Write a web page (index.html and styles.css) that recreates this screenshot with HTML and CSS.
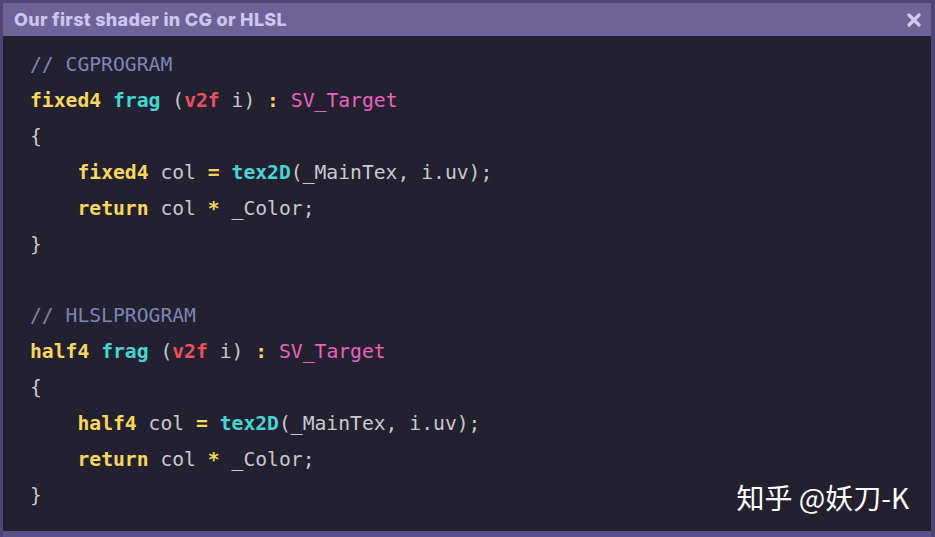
FILE: index.html
```html
<!DOCTYPE html>
<html>
<head>
<meta charset="utf-8">
<link rel="stylesheet" href="styles.css">
</head>
<body>
<div class="frame">
  <div class="header">
    <span class="title">Our first shader in CG or HLSL</span>
    <svg class="close" width="14" height="14" viewBox="0 0 14 14"><path d="M2 2 L12 12 M12 2 L2 12" stroke="#d2cbf0" stroke-width="3.2" stroke-linecap="round"/></svg>
  </div>
  <div class="code">
<pre><span class="cm">// CGPROGRAM</span>
<span class="kw">fixed4</span> <span class="fn">frag</span> (<span class="ty">v2f</span> i) <span class="op">:</span> <span class="sem">SV_Target</span>
{
    <span class="kw">fixed4</span> col <span class="op">=</span> <span class="fn">tex2D</span>(_MainTex, i.uv);
    <span class="kw">return</span> col <span class="op">*</span> _Color;
}

<span class="cm">// HLSLPROGRAM</span>
<span class="kw">half4</span> <span class="fn">frag</span> (<span class="ty">v2f</span> i) <span class="op">:</span> <span class="sem">SV_Target</span>
{
    <span class="kw">half4</span> col <span class="op">=</span> <span class="fn">tex2D</span>(_MainTex, i.uv);
    <span class="kw">return</span> col <span class="op">*</span> _Color;
}</pre>
    <div class="mark">知乎 @妖刀-K</div>
  </div>
</div>
</body>
</html>
```

FILE: styles.css
```css
html, body {
  margin: 0;
  padding: 0;
  background: #4f4577;
}
.frame {
  width: 935px;
  height: 537px;
  box-sizing: border-box;
  border-style: solid;
  border-color: #4f4577;
  border-width: 3px 4px 0 3px;
  display: flex;
  flex-direction: column;
  background: #4f4577;
}
.header {
  height: 33px;
  background: #6e6399;
  display: flex;
  align-items: center;
  justify-content: space-between;
  padding: 0 10px 0 11px;
  flex: none;
}
.title {
  font-family: Inter, "Open Sans", sans-serif;
  font-weight: 800;
  font-size: 18px;
  letter-spacing: 0.3px;
  color: #cdc5ee;
}
.close {
  display: block;
}
.code {
  position: relative;
  flex: 1;
  background: #23212f;
  border-bottom: 6px solid #5a5088;
  padding: 11px 0 0 27px;
}
pre {
  margin: 0;
  font-family: "DejaVu Sans Mono", monospace;
  font-size: 19.7px;
  line-height: 35.9px;
  color: #c9c8d2;
}
.cm { color: #7d84ba; }
.kw { color: #f6d65c; font-weight: bold; }
.fn { color: #45d6d3; font-weight: bold; }
.ty { color: #ee4f5c; font-weight: bold; }
.sem { color: #ec62c0; }
.op { color: #f6d65c; font-weight: bold; }
.mark {
  position: absolute;
  right: 22px;
  bottom: 14px;
  font-family: "Noto Sans CJK SC", sans-serif;
  font-size: 28px;
  color: #ffffff;
}
```
